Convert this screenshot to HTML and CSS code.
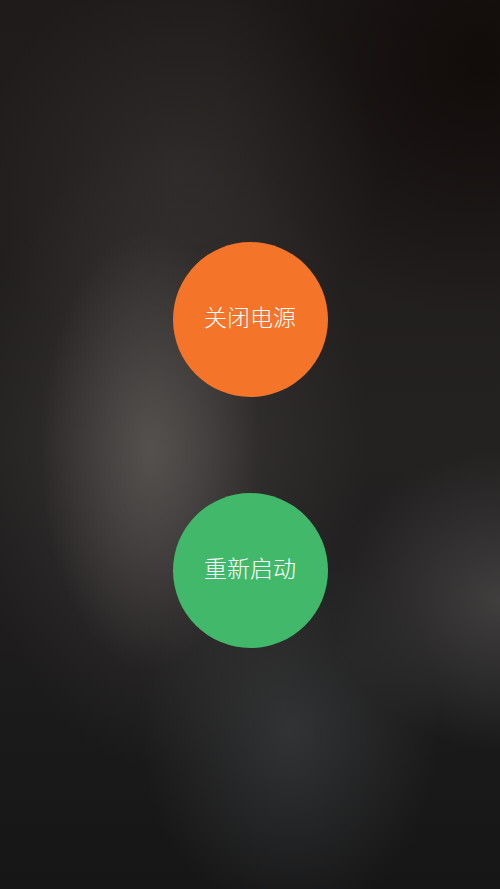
FILE: index.html
```html
<!DOCTYPE html>
<html>
  <head>
    <title>电源</title>
    <link rel="stylesheet" href="styles.css">
  </head>
  <body>
    <main class="power-menu">
      <button class="power-btn power-off">关闭电源</button>
      <button class="power-btn reboot">重新启动</button>
    </main>
  </body>
</html>
```

FILE: styles.css
```css
html, body {
  height: 100%;
}

body {
  margin: 0;
  background-color: #1d1b1b;
  background-image:
    radial-gradient(ellipse 110px 220px at 150px 450px, rgba(98, 93, 90, 0.7), rgba(98, 93, 90, 0) 100%),
    radial-gradient(ellipse 200px 320px at 170px 450px, rgba(70, 67, 66, 0.6), rgba(70, 67, 66, 0) 100%),
    radial-gradient(ellipse 170px 150px at 500px 600px, rgba(72, 71, 70, 0.8), rgba(72, 71, 70, 0) 100%),
    radial-gradient(ellipse 150px 190px at 290px 730px, rgba(58, 62, 63, 0.7), rgba(58, 62, 63, 0) 100%),
    radial-gradient(ellipse 200px 200px at 180px 170px, rgba(58, 54, 52, 0.5), rgba(58, 54, 52, 0) 100%),
    radial-gradient(ellipse 260px 260px at 480px 60px, rgba(16, 10, 8, 0.9), rgba(16, 10, 8, 0) 100%),
    linear-gradient(180deg, #1e1b1a 0%, #242121 50%, #161617 100%);
  font-family: "Noto Sans CJK SC", "Noto Sans", sans-serif;
  overflow: hidden;
}

.power-menu {
  display: flex;
  flex-direction: column;
  align-items: center;
  gap: 96px;
  padding-top: 242px;
}

.power-btn {
  width: 155px;
  height: 155px;
  border: none;
  border-radius: 50%;
  color: #fff;
  font-family: inherit;
  font-size: 23px;
  font-weight: 300;
  line-height: 1;
  padding: 0 0 6px;
}

.power-off {
  background: #f47429;
}

.reboot {
  background: #42b96a;
}
```
